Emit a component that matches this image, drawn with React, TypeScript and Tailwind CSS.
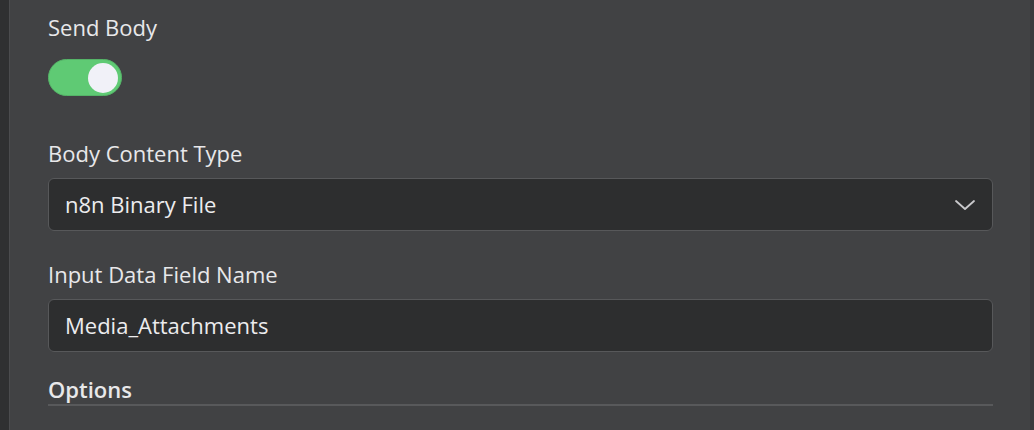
import React from 'react';

const Label: React.FC<{ children: React.ReactNode }> = ({ children }) => (
  <div className="text-[22px] leading-[30px] text-[#e8e8ea]">{children}</div>
);

const App: React.FC = () => {
  return (
    <div
      className="flex h-[430px] w-[1034px] overflow-hidden bg-[#414244]"
      style={{ fontFamily: '"Open Sans", "Noto Sans", sans-serif' }}
    >
      <div className="w-[9px] shrink-0 bg-[#2f3031]" />
      <div className="w-px shrink-0 bg-[#4b4c4e]" />
      <div className="flex flex-1 flex-col pl-[38px] pr-[37px] pt-[12px]">
        <Label>Send Body</Label>
        <div className="mt-[17px] flex h-[37px] w-[74px] items-center justify-end rounded-full border border-[#55b468] bg-[#5fca74] pr-[3px]">
          <div className="h-[30px] w-[30px] rounded-full bg-[#f1f1f8]" />
        </div>

        <div className="mt-[42px]">
          <Label>Body Content Type</Label>
        </div>
        <div className="mt-[10px] flex h-[53px] items-center justify-between rounded-[6px] border border-[#57585a] bg-[#2d2e2f] pl-[16px] pr-[16px]">
          <span className="text-[22px] text-[#ececee]">n8n Binary File</span>
          <svg width="22" height="14" viewBox="0 0 22 14" fill="none">
            <path d="M2 3l9 8 9-8" stroke="#c9c9cc" strokeWidth="1.8" strokeLinecap="round" strokeLinejoin="round" />
          </svg>
        </div>

        <div className="mt-[28px]">
          <Label>Input Data Field Name</Label>
        </div>
        <div className="mt-[10px] flex h-[53px] items-center rounded-[6px] border border-[#57585a] bg-[#2d2e2f] pl-[16px]">
          <span className="text-[22px] text-[#ececee]">Media_Attachments</span>
        </div>

        <div className="mt-[23px] border-b-2 border-[#58595b] text-[22px] font-semibold leading-[29px] text-[#e8e8ea]">
          Options
        </div>
      </div>
      <div className="w-[4px] shrink-0 bg-[#3a3b3d]" />
    </div>
  );
};

export default App;
